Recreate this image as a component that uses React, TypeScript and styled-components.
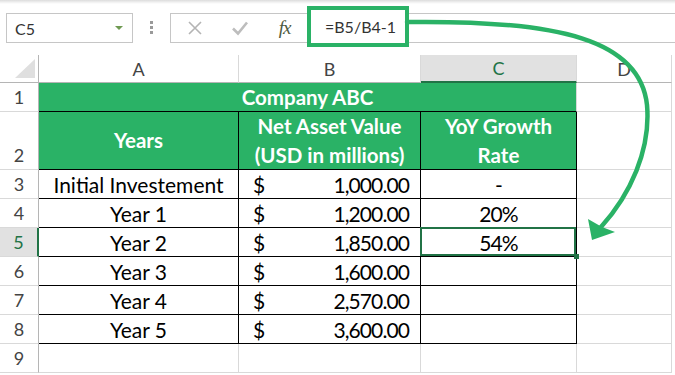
import React from 'react';
import styled, { createGlobalStyle } from 'styled-components';

const MARK = '#2ab266';
const XL_GREEN = '#217346';
const GRID = '#d9d9d9';
const HEAD_LINE = '#b5b5b5';

const GlobalStyle = createGlobalStyle`
  html, body {
    margin: 0;
    padding: 0;
    background: #ffffff;
  }
  body {
    font-family: Lato, 'Open Sans', sans-serif;
  }
`;

const Page = styled.div`
  position: relative;
  width: 675px;
  height: 375px;
  overflow: hidden;
  background: #ffffff;
`;

/* ---------- formula bar ---------- */

const FormulaBar = styled.div`
  height: 55px;
  display: flex;
  align-items: flex-start;
  background: linear-gradient(#dcdcdc 0, #efefef 2px, #ffffff 4px);
`;

const NameBox = styled.div`
  margin: 13px 0 0 6px;
  width: 127px;
  height: 30px;
  box-sizing: border-box;
  border: 1px solid #c6c6c6;
  display: flex;
  align-items: center;
  justify-content: space-between;
  padding: 0 9px 0 8px;
  font-size: 16px;
  color: #333333;
`;

const DropCaret = styled.span`
  width: 0;
  height: 0;
  border-left: 4px solid transparent;
  border-right: 4px solid transparent;
  border-top: 4px solid #6f9a52;
`;

const DragDots = styled.div`
  width: 37px;
  margin-top: 21px;
  display: flex;
  flex-direction: column;
  align-items: center;
  gap: 2px;

  span {
    width: 3px;
    height: 3px;
    background: #9a9a9a;
  }
`;

const ButtonBox = styled.div`
  margin-top: 13px;
  width: 137px;
  height: 30px;
  box-sizing: border-box;
  border: 1px solid #c6c6c6;
  border-right: none;
  display: flex;
  align-items: center;
  padding-left: 1px;
`;

const ButtonSlot = styled.div`
  width: 45px;
  display: flex;
  align-items: center;
  justify-content: center;
`;

const FxLabel = styled.span`
  font-family: 'Liberation Serif', serif;
  font-style: italic;
  font-size: 19px;
  color: #4d5a40;
  letter-spacing: -1px;
`;

const FormulaInput = styled.div`
  margin-top: 6px;
  width: 102px;
  height: 41px;
  box-sizing: border-box;
  border: 4px solid ${MARK};
  display: flex;
  align-items: center;
  padding-left: 14px;
  font-size: 16px;
  color: #333333;
`;

const FormulaRest = styled.div`
  flex: 1;
  margin-top: 13px;
  height: 30px;
  box-sizing: border-box;
  border-top: 1px solid #c6c6c6;
  border-bottom: 1px solid #c6c6c6;
`;

/* ---------- sheet ---------- */

const Sheet = styled.div`
  display: grid;
  grid-template-columns: 39px 200px 182px 156px 95px;
  grid-template-rows: 28px 29px 58px repeat(7, 29px);
`;

const Corner = styled.div`
  position: relative;
  box-sizing: border-box;
  border-right: 1px solid ${HEAD_LINE};
  border-bottom: 1px solid ${HEAD_LINE};

  &::after {
    content: '';
    position: absolute;
    right: 3px;
    bottom: 4px;
    width: 0;
    height: 0;
    border-left: 20px solid transparent;
    border-bottom: 19px solid #dfdfdf;
  }
`;

const ColHead = styled.div<{ $active?: boolean }>`
  box-sizing: border-box;
  display: flex;
  align-items: center;
  justify-content: center;
  font-size: 18px;
  color: ${(p) => (p.$active ? XL_GREEN : '#444444')};
  background: ${(p) => (p.$active ? '#e1e1e1' : '#ffffff')};
  border-right: 1px solid ${GRID};
  border-bottom: ${(p) => (p.$active ? `2px solid ${XL_GREEN}` : `1px solid ${HEAD_LINE}`)};
`;

const RowHead = styled.div<{ $active?: boolean }>`
  box-sizing: border-box;
  display: flex;
  align-items: flex-end;
  justify-content: center;
  padding-bottom: 2px;
  font-size: 18px;
  line-height: 24px;
  color: ${(p) => (p.$active ? XL_GREEN : '#444444')};
  background: ${(p) => (p.$active ? '#e1e1e1' : '#ffffff')};
  border-right: ${(p) => (p.$active ? `2px solid ${XL_GREEN}` : `1px solid ${HEAD_LINE}`)};
  border-bottom: 1px solid ${GRID};
`;

type Align = 'center' | 'between';

const Cell = styled.div<{
  $span?: number;
  $fill?: boolean;
  $align?: Align;
  $rb?: string;
  $bb?: string;
  $selected?: boolean;
}>`
  position: relative;
  box-sizing: border-box;
  grid-column: span ${(p) => p.$span ?? 1};
  display: flex;
  align-items: center;
  justify-content: ${(p) => (p.$align === 'between' ? 'space-between' : 'center')};
  padding: ${(p) => (p.$align === 'between' ? '0 11px 0 14px' : '0')};
  text-align: center;
  font-size: ${(p) => (p.$fill ? '20.5px' : '21px')};
  line-height: 29px;
  font-weight: ${(p) => (p.$fill ? 700 : 400)};
  color: ${(p) => (p.$fill ? '#ffffff' : '#000000')};
  background: ${(p) => (p.$fill ? MARK : '#ffffff')};
  border-right: 1px solid ${(p) => p.$rb ?? GRID};
  border-bottom: 1px solid ${(p) => p.$bb ?? GRID};

  ${(p) =>
    p.$selected &&
    `
    &::after {
      content: '';
      position: absolute;
      left: -1px;
      top: -1px;
      right: 0;
      bottom: 0;
      border: 2px solid ${XL_GREEN};
    }
    &::before {
      content: '';
      position: absolute;
      right: -3px;
      bottom: -3px;
      width: 5px;
      height: 5px;
      background: ${XL_GREEN};
      z-index: 1;
    }
  `}
`;

/* digits in the reference font run narrower than Lato's */
const Num = styled.span`
  letter-spacing: -0.9px;
`;

const Arrow = styled.svg`
  position: absolute;
  left: 0;
  top: 0;
  pointer-events: none;
`;

const rows = [
  { label: 'Initial Investement', value: '1,000.00', growth: '-' },
  { label: 'Year 1', value: '1,200.00', growth: '20%' },
  { label: 'Year 2', value: '1,850.00', growth: '54%' },
  { label: 'Year 3', value: '1,600.00', growth: '' },
  { label: 'Year 4', value: '2,570.00', growth: '' },
  { label: 'Year 5', value: '3,600.00', growth: '' },
];

const INK = '#000000';

const App: React.FC = () => {
  return (
    <Page>
      <GlobalStyle />

      <FormulaBar>
        <NameBox>
          C5
          <DropCaret />
        </NameBox>
        <DragDots>
          <span />
          <span />
          <span />
        </DragDots>
        <ButtonBox>
          <ButtonSlot>
            <svg width="16" height="16" viewBox="0 0 16 16">
              <path d="M2 2 L14 14 M14 2 L2 14" stroke="#b4b4b4" strokeWidth="1.6" fill="none" />
            </svg>
          </ButtonSlot>
          <ButtonSlot>
            <svg width="18" height="16" viewBox="0 0 18 16">
              <path d="M2 8.5 L7 13.5 L16 2.5" stroke="#bdbdbd" strokeWidth="2.6" fill="none" />
            </svg>
          </ButtonSlot>
          <ButtonSlot>
            <FxLabel>fx</FxLabel>
          </ButtonSlot>
        </ButtonBox>
        <FormulaInput>=B5/B4-1</FormulaInput>
        <FormulaRest />
      </FormulaBar>

      <Sheet>
        <Corner />
        <ColHead>A</ColHead>
        <ColHead>B</ColHead>
        <ColHead $active>C</ColHead>
        <ColHead>D</ColHead>

        <RowHead>1</RowHead>
        <Cell $span={3} $fill $bb={INK}>
          Company ABC
        </Cell>
        <Cell />

        <RowHead>2</RowHead>
        <Cell $fill $rb={INK} $bb={INK}>
          Years
        </Cell>
        <Cell $fill $rb={INK} $bb={INK}>
          Net Asset Value
          <br />
          (USD in millions)
        </Cell>
        <Cell $fill $rb={INK} $bb={INK}>
          YoY Growth
          <br />
          Rate
        </Cell>
        <Cell />

        {rows.map((r, i) => (
          <React.Fragment key={r.label}>
            <RowHead $active={i === 2}>{i + 3}</RowHead>
            <Cell $rb={INK} $bb={INK}>
              {r.label}
            </Cell>
            <Cell $align="between" $rb={INK} $bb={INK}>
              <span>$</span>
              <Num>{r.value}</Num>
            </Cell>
            <Cell $rb={INK} $bb={INK} $selected={i === 2}>
              <Num>{r.growth}</Num>
            </Cell>
            <Cell />
          </React.Fragment>
        ))}

        <RowHead>9</RowHead>
        <Cell />
        <Cell />
        <Cell />
        <Cell />
      </Sheet>

      <Arrow width="675" height="375" viewBox="0 0 675 375">
        <path
          d="M407 22 C 560 20 640 40 647 105 C 651 150 630 195 601 227"
          stroke={MARK}
          strokeWidth="4.5"
          fill="none"
          strokeLinecap="round"
        />
        <path d="M588 219 L592 240 L615 232 L602 227 Z" fill={MARK} />
      </Arrow>
    </Page>
  );
};

export default App;
